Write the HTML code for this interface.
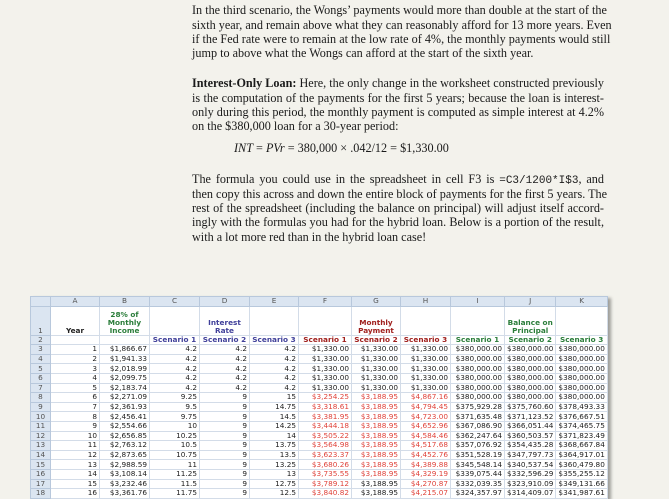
<!DOCTYPE html>
<html><head><meta charset="utf-8"><style>
body{margin:0;width:669px;height:497px;background:#f3f2ec;overflow:hidden;position:relative;font-family:"Liberation Serif",serif;color:#1a1a1a}
.l{position:absolute;left:192px;width:412px;font-size:12.2px;line-height:14px;white-space:nowrap;text-align:justify;text-align-last:justify}
.l.e{text-align-last:left}
.m{font-family:"Liberation Mono",monospace;font-size:11px}
table{position:absolute;left:30px;top:296px;border-collapse:collapse;table-layout:fixed;background:#fff;font-family:"DejaVu Sans",sans-serif;font-size:7.3px;box-shadow:3px 2px 3px rgba(0,0,0,.35)}
td{border:1px solid #d3dce8;padding:0 2px;height:8.6px;line-height:8px;text-align:right;white-space:nowrap;overflow:hidden;color:#222}
tr.h td{background:#dbe5f1;color:#555;text-align:center;border-color:#b8c8dc}
td.r{background:#dbe5f1;color:#555;text-align:center;border-color:#b8c8dc}
.b{font-weight:bold;text-align:center}
.g{color:#2a7d3a}.p{color:#40409a}.d{color:#a0201e}.x{color:#e0453c}
</style></head><body>
<div class="l" style="top:3px">In the third scenario, the Wongs’ payments would more than double at the start of the</div>
<div class="l" style="top:17.5px">sixth year, and remain above what they can reasonably afford for 13 more years. Even</div>
<div class="l" style="top:32px">if the Fed rate were to remain at the low rate of 4%, the monthly payments would still</div>
<div class="l e" style="top:46px">jump to above what the Wongs can afford at the start of the sixth year.</div>
<div class="l" style="top:76px"><b>Interest-Only Loan:</b> Here, the only change in the worksheet constructed previously</div>
<div class="l" style="top:90.5px">is the computation of the payments for the first 5 years; because the loan is interest-</div>
<div class="l" style="top:105px">only during this period, the monthly payment is computed as simple interest at 4.2%</div>
<div class="l e" style="top:119px">on the $380,000 loan for a 30-year period:</div>
<div class="l e" style="top:141px;left:234px"><i>INT</i> = <i>PVr</i> = 380,000 × .042/12 = $1,330.00</div>
<div class="l" style="top:172px">The formula you could use in the spreadsheet in cell F3 is <span class="m">=C3/1200*I$3</span>, and</div>
<div class="l" style="top:186.5px">then copy this across and down the entire block of payments for the first 5 years. The</div>
<div class="l" style="top:201px">rest of the spreadsheet (including the balance on principal) will adjust itself accord-</div>
<div class="l" style="top:215px">ingly with the formulas you had for the hybrid loan. Below is a portion of the result,</div>
<div class="l e" style="top:229.5px">with a lot more red than in the hybrid loan case!</div>
<table>
<colgroup><col style="width:20px"><col style="width:49px"><col style="width:50px"><col style="width:50px"><col style="width:50px"><col style="width:49px"><col style="width:53px"><col style="width:49px"><col style="width:50px"><col style="width:54px"><col style="width:49px"><col style="width:49px"></colgroup>
<tr class="h"><td></td><td>A</td><td>B</td><td>C</td><td>D</td><td>E</td><td>F</td><td>G</td><td>H</td><td>I</td><td>J</td><td>K</td></tr>
<tr style="height:29px"><td class="r" style="vertical-align:bottom">1</td><td class="b" style="vertical-align:bottom">Year</td><td class="b g" style="vertical-align:bottom">28% of<br>Monthly<br>Income</td><td></td><td class="b p" style="vertical-align:bottom">Interest<br>Rate</td><td></td><td></td><td class="b d" style="vertical-align:bottom">Monthly<br>Payment</td><td></td><td></td><td class="b g" style="vertical-align:bottom">Balance on<br>Principal</td><td></td></tr>
<tr><td class="r">2</td><td></td><td></td><td class="b p">Scenario 1</td><td class="b p">Scenario 2</td><td class="b p">Scenario 3</td><td class="b d">Scenario 1</td><td class="b d">Scenario 2</td><td class="b d">Scenario 3</td><td class="b g">Scenario 1</td><td class="b g">Scenario 2</td><td class="b g">Scenario 3</td></tr>
<tr><td class="r">3</td><td>1</td><td>$1,866.67</td><td>4.2</td><td>4.2</td><td>4.2</td><td>$1,330.00</td><td>$1,330.00</td><td>$1,330.00</td><td>$380,000.00</td><td>$380,000.00</td><td>$380,000.00</td></tr>
<tr><td class="r">4</td><td>2</td><td>$1,941.33</td><td>4.2</td><td>4.2</td><td>4.2</td><td>$1,330.00</td><td>$1,330.00</td><td>$1,330.00</td><td>$380,000.00</td><td>$380,000.00</td><td>$380,000.00</td></tr>
<tr><td class="r">5</td><td>3</td><td>$2,018.99</td><td>4.2</td><td>4.2</td><td>4.2</td><td>$1,330.00</td><td>$1,330.00</td><td>$1,330.00</td><td>$380,000.00</td><td>$380,000.00</td><td>$380,000.00</td></tr>
<tr><td class="r">6</td><td>4</td><td>$2,099.75</td><td>4.2</td><td>4.2</td><td>4.2</td><td>$1,330.00</td><td>$1,330.00</td><td>$1,330.00</td><td>$380,000.00</td><td>$380,000.00</td><td>$380,000.00</td></tr>
<tr><td class="r">7</td><td>5</td><td>$2,183.74</td><td>4.2</td><td>4.2</td><td>4.2</td><td>$1,330.00</td><td>$1,330.00</td><td>$1,330.00</td><td>$380,000.00</td><td>$380,000.00</td><td>$380,000.00</td></tr>
<tr><td class="r">8</td><td>6</td><td>$2,271.09</td><td>9.25</td><td>9</td><td>15</td><td class="x">$3,254.25</td><td class="x">$3,188.95</td><td class="x">$4,867.16</td><td>$380,000.00</td><td>$380,000.00</td><td>$380,000.00</td></tr>
<tr><td class="r">9</td><td>7</td><td>$2,361.93</td><td>9.5</td><td>9</td><td>14.75</td><td class="x">$3,318.61</td><td class="x">$3,188.95</td><td class="x">$4,794.45</td><td>$375,929.28</td><td>$375,760.60</td><td>$378,493.33</td></tr>
<tr><td class="r">10</td><td>8</td><td>$2,456.41</td><td>9.75</td><td>9</td><td>14.5</td><td class="x">$3,381.95</td><td class="x">$3,188.95</td><td class="x">$4,723.00</td><td>$371,635.48</td><td>$371,123.52</td><td>$376,667.51</td></tr>
<tr><td class="r">11</td><td>9</td><td>$2,554.66</td><td>10</td><td>9</td><td>14.25</td><td class="x">$3,444.18</td><td class="x">$3,188.95</td><td class="x">$4,652.96</td><td>$367,086.90</td><td>$366,051.44</td><td>$374,465.75</td></tr>
<tr><td class="r">12</td><td>10</td><td>$2,656.85</td><td>10.25</td><td>9</td><td>14</td><td class="x">$3,505.22</td><td class="x">$3,188.95</td><td class="x">$4,584.46</td><td>$362,247.64</td><td>$360,503.57</td><td>$371,823.49</td></tr>
<tr><td class="r">13</td><td>11</td><td>$2,763.12</td><td>10.5</td><td>9</td><td>13.75</td><td class="x">$3,564.98</td><td class="x">$3,188.95</td><td class="x">$4,517.68</td><td>$357,076.92</td><td>$354,435.28</td><td>$368,667.84</td></tr>
<tr><td class="r">14</td><td>12</td><td>$2,873.65</td><td>10.75</td><td>9</td><td>13.5</td><td class="x">$3,623.37</td><td class="x">$3,188.95</td><td class="x">$4,452.76</td><td>$351,528.19</td><td>$347,797.73</td><td>$364,917.01</td></tr>
<tr><td class="r">15</td><td>13</td><td>$2,988.59</td><td>11</td><td>9</td><td>13.25</td><td class="x">$3,680.26</td><td class="x">$3,188.95</td><td class="x">$4,389.88</td><td>$345,548.14</td><td>$340,537.54</td><td>$360,479.80</td></tr>
<tr><td class="r">16</td><td>14</td><td>$3,108.14</td><td>11.25</td><td>9</td><td>13</td><td class="x">$3,735.55</td><td class="x">$3,188.95</td><td class="x">$4,329.19</td><td>$339,075.44</td><td>$332,596.29</td><td>$355,255.12</td></tr>
<tr><td class="r">17</td><td>15</td><td>$3,232.46</td><td>11.5</td><td>9</td><td>12.75</td><td class="x">$3,789.12</td><td>$3,188.95</td><td class="x">$4,270.87</td><td>$332,039.35</td><td>$323,910.09</td><td>$349,131.66</td></tr>
<tr><td class="r">18</td><td>16</td><td>$3,361.76</td><td>11.75</td><td>9</td><td>12.5</td><td class="x">$3,840.82</td><td>$3,188.95</td><td class="x">$4,215.07</td><td>$324,357.97</td><td>$314,409.07</td><td>$341,987.61</td></tr>
</table>
</body></html>
